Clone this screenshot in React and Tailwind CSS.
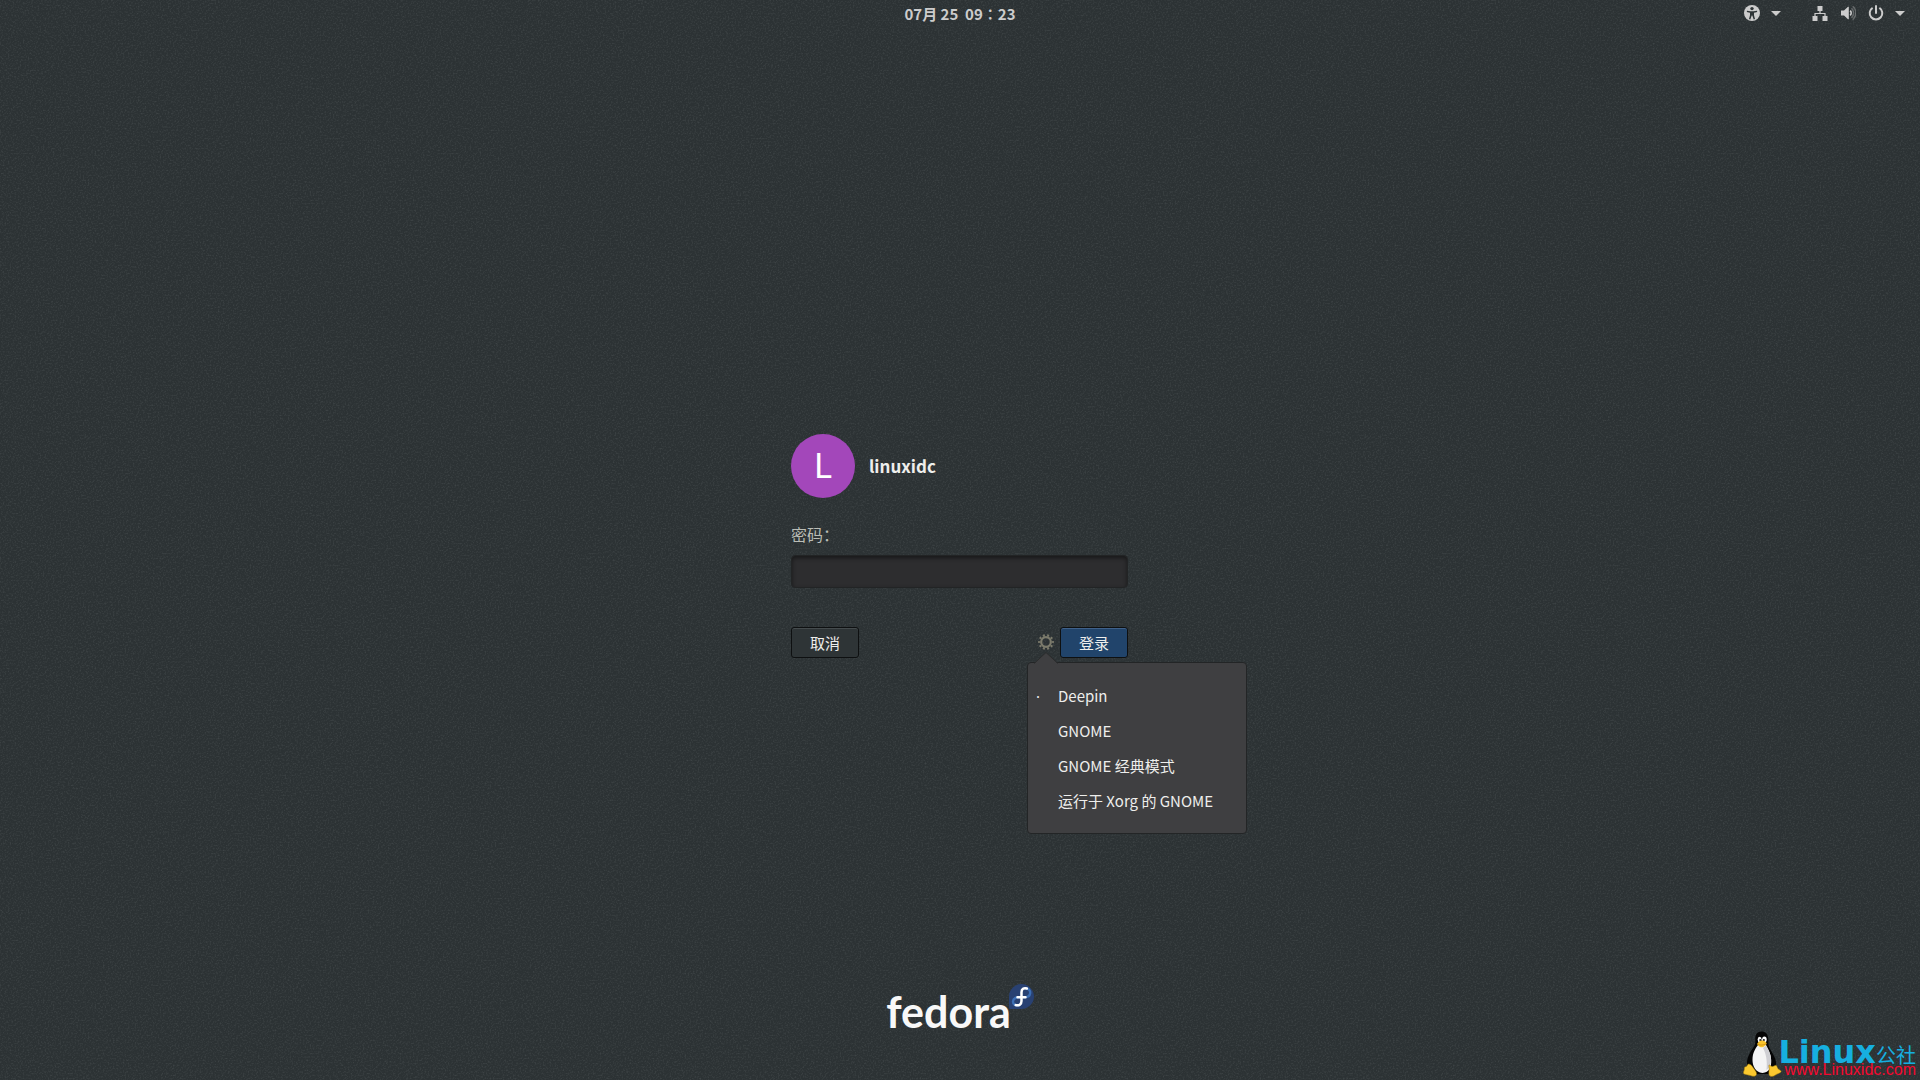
import React, { useState } from 'react';

const sessions = [
  { id: 'deepin', label: 'Deepin' },
  { id: 'gnome', label: 'GNOME' },
  { id: 'gnome-classic', label: 'GNOME 经典模式' },
  { id: 'gnome-xorg', label: '运行于 Xorg 的 GNOME' },
];

const NoiseBackground = () => (
  <svg className="absolute inset-0 -z-10 h-full w-full" aria-hidden="true">
    <filter id="noise" x="0" y="0" width="100%" height="100%">
      <feTurbulence type="fractalNoise" baseFrequency="0.6" numOctaves="2" stitchTiles="stitch" />
      <feColorMatrix type="matrix" values="0 0 0 0 0.6  0 0 0 0 0.65  0 0 0 0 0.65  0.26 0 0 0 -0.12" />
    </filter>
    <rect width="100%" height="100%" filter="url(#noise)" />
  </svg>
);

const CaretIcon = () => (
  <svg className="h-4 w-4" viewBox="0 0 16 16" fill="currentColor" aria-hidden="true">
    <path d="M3 6h10l-5 5z" />
  </svg>
);

const AccessibilityIcon = () => (
  <svg className="h-4 w-4" viewBox="0 0 16 16" aria-hidden="true">
    <circle cx="8" cy="8" r="8" fill="currentColor" />
    <circle cx="8" cy="3.6" r="1.7" fill="#2e3436" />
    <path d="M3 5.700l3.500.6h3l3.500-.6.2 1.300-3.200.8v2.400l1 3.800-1.300.5L8.300 10.500h-.6L6.300 14.500 5 14l1-3.800V7.800L2.800 7z" fill="#2e3436" />
  </svg>
);

const NetworkIcon = () => (
  <svg className="h-4 w-4" viewBox="0 0 16 16" fill="currentColor" aria-hidden="true">
    <path d="M5.500 1h5v5h-5zM.5 11h5v5h-5zM10.500 11h5v5h-5z" />
    <path d="M8 6v2.500M3 11V8.500h10V11" fill="none" stroke="currentColor" strokeWidth="1.200" />
  </svg>
);

const VolumeIcon = () => (
  <svg className="h-4 w-4" viewBox="0 0 16 16" aria-hidden="true">
    <path d="M1 5.500h3L8 1.800h.8v12.400H8L4 10.500H1z" fill="currentColor" />
    <path d="M10.200 5.600a3.400 3.400 0 0 1 0 4.800" fill="none" stroke="currentColor" strokeWidth="1.600" />
    <path d="M11.500 3.200a6.500 6.500 0 0 1 0 9.600M12.700 1.200a9 9 0 0 1 0 13.600" fill="none" stroke="currentColor" strokeWidth="1.500" opacity="0.35" />
  </svg>
);

const PowerIcon = () => (
  <svg className="h-4 w-4" viewBox="0 0 16 16" fill="none" stroke="currentColor" strokeWidth="2" aria-hidden="true">
    <path d="M4.600 2.800a6.300 6.300 0 1 0 6.800 0" />
    <path d="M8 1v7" strokeLinecap="round" />
  </svg>
);

const GearIcon = () => (
  <svg className="h-4 w-4" viewBox="0 0 16 16" fill="none" stroke="currentColor" aria-hidden="true">
    <circle cx="8" cy="8" r="4.800" strokeWidth="2.200" />
    {/* ten teeth */}
    <circle cx="8" cy="8" r="6.800" strokeWidth="2.200" pathLength="100" strokeDasharray="4.600 5.400" strokeDashoffset="2.300" />
  </svg>
);

const TopBar = () => (
  <header className="grid h-7 grid-cols-[1fr_auto_1fr] items-center px-3 text-[#cccccc]">
    <button type="button" className="col-start-2 text-[15px] leading-7 font-bold whitespace-pre">{'07月 25  09∶23'}</button>
    <div className="flex items-center justify-end gap-7 pb-[2px]">
      <button type="button" aria-label="辅助功能" className="flex items-center gap-2">
        <AccessibilityIcon />
        <CaretIcon />
      </button>
      <button type="button" aria-label="系统" className="flex items-center gap-3">
        <NetworkIcon />
        <VolumeIcon />
        <span className="flex items-center gap-2">
          <PowerIcon />
          <CaretIcon />
        </span>
      </button>
    </div>
  </header>
);

const SessionMenu = ({ selected, onSelect }) => (
  <div className="absolute top-7 -left-[11px] z-10 w-[220px] rounded border border-[#232526] bg-[#3f3f41] pt-4 pb-[14px]">
    <svg className="absolute -top-[11px] left-[6px] h-3 w-6" viewBox="0 0 24 12" aria-hidden="true">
      <path d="M0 12L12 0.500L24 12z" fill="#3f3f41" />
      <path d="M0 11.500L12 0.500L24 11.500" fill="none" stroke="#2b2c2d" />
    </svg>
    <ul>
      {sessions.map(({ id, label }) => (
        <li key={id}>
          <button
            type="button"
            className="flex h-[35px] w-full items-center text-left whitespace-nowrap text-[#eeeeec]"
            onClick={() => onSelect(id)}
          >
            <span className="w-[30px] pl-2 font-['Noto_Sans'] text-[15px]">{selected === id ? '·' : ''}</span>
            {label}
          </button>
        </li>
      ))}
    </ul>
  </div>
);

const LoginForm = () => {
  const [session, setSession] = useState('deepin');
  const [open, setOpen] = useState(true);

  return (
    <form className="w-[338px] pr-px text-[15px] leading-5" onSubmit={(e) => e.preventDefault()}>
      <div className="flex items-center gap-[14px]">
        <div className="flex h-16 w-16 items-center justify-center rounded-full bg-[#a347ba] font-['Noto_Sans'] text-[35px] leading-none text-white">
          <span className="pb-1">L</span>
        </div>
        <h1 className="text-[17px] leading-6 font-bold text-[#eeeeec]">linuxidc</h1>
      </div>
      <label htmlFor="password" className="mt-[26px] block text-base leading-5 text-[#babdb6]">密码：</label>
      <input
        id="password"
        type="password"
        className="mt-[11px] block h-[33px] w-full rounded border border-[#222425] bg-[#2d2d2f] px-2 text-[#eeeeec] shadow-[inset_0_2px_4px_rgba(0,0,0,0.5)] outline-none"
      />
      <div className="mt-[39px] flex items-center">
        <button type="button" className="h-[31px] w-[68px] rounded-[3px] border border-[#0e1011] bg-[#2e3436] text-[#eeeeec] shadow-[inset_0_1px_0_#454b4d]">
          取消
        </button>
        <div className="relative mr-[6px] mb-[2px] ml-auto">
          <button type="button" aria-label="选择会话" className="block text-[#7c7b6c]" onClick={() => setOpen(!open)}>
            <GearIcon />
          </button>
          {open && <SessionMenu selected={session} onSelect={setSession} />}
        </div>
        <button type="submit" className="h-[31px] w-[68px] rounded-[3px] border border-[#0e1011] bg-[#21446b] text-[#eeeeec] shadow-[inset_0_1px_0_#40618a]">
          登录
        </button>
      </div>
    </form>
  );
};

const FedoraMark = () => (
  <svg className="mt-1 -ml-[2px] h-[25px] w-[25px]" viewBox="0 0 25 25" fill="none" strokeLinecap="round" aria-hidden="true">
    <path d="M12.500 0A12.500 12.500 0 1 1 12.500 25H1.600A1.600 1.600 0 0 1 0 23.400V12.500A12.500 12.500 0 0 1 12.500 0z" fill="#294172" />
    <g stroke="#3c6eb4" strokeWidth="2.400">
      <path d="M16.500 4.300c3.200.2 5 2.400 4.700 4.800-.4 2.800-2.700 4.300-6.200 4.100" />
      <path d="M11 13.200c-3.800-.3-6.800 1.400-7 4.300-.1 2.500 2 4 4.800 4" />
    </g>
    <path d="M17.800 4.500c-3-1-5.300.7-5.300 3.700v8.800c0 3.400-2.500 5-5.800 4.100M8.500 13.200h8" stroke="#fff" strokeWidth="2.500" />
  </svg>
);

const FedoraLogo = () => (
  <div className="flex items-start">
    <span className="mt-2 font-['Lato'] text-[43px] leading-[48px] font-bold text-[#f8f8f8]">fedora</span>
    <FedoraMark />
  </div>
);

const Tux = () => (
  <svg className="h-[46px] w-[39px]" viewBox="0 0 39 46" aria-hidden="true">
    <path d="M18.500.5c-4 0-6.300 2.800-6.200 7.500.1 4 .2 5.500-2.300 9C7 21 4 27 4 32c0 4 3 9 6 11h17c4-2 6.500-7 6-12-.6-5-4-9.500-6.300-13.500C25 14.500 25.500 11 25.200 7.500 24.800 3 22.500.5 18.500.5z" fill="#050505" />
    <path d="M15 14c-3 4-5.500 8-5.500 15 0 6 3 12.500 10 13 7-.5 9-6 8.700-13-.2-6-2.700-10.500-5.200-15z" fill="#f4f4f4" />
    <path d="M20 17c3 6 4.500 12 3.500 22 3-2 4.500-5 4.500-10 0-6-2.500-10-5-14.500z" fill="#cfcfd3" />
    <ellipse cx="16.600" cy="8.500" rx="2" ry="2.700" fill="#fff" />
    <ellipse cx="21.400" cy="8.500" rx="2.300" ry="2.900" fill="#fff" />
    <circle cx="17.200" cy="9" r=".9" fill="#111" />
    <circle cx="20.900" cy="9" r="1" fill="#111" />
    <path d="M14.300 12.500c1.200-1.800 3-3 4.600-3 1.800 0 4.300 1.200 4.700 2.700.3 1.500-3.100 4.100-5 4.100-1.800 0-4.800-2-4.300-3.800z" fill="#f9c32c" />
    <path d="M14.500 12.800c2 1.600 5.500 1.800 9-.3" fill="none" stroke="#b87a08" strokeWidth=".6" />
    <path d="M5.500 33c2-.4 3.800 2.200 5.300 4.500 1.400 2.300 3.300 3.800 2.700 6-.7 2.300-3.500 2-5.600 1.200C5.500 43.800 1 43.700.4 42.200c-.4-1.300 1.200-2.700.9-4.600-.2-2 1-1.700 2-2.100 1-.5 1-2.300 2.200-2.500z" fill="#fbc92f" stroke="#8c6a08" strokeWidth=".5" />
    <path d="M26.500 34c1.200 1 2.600 1.900 4.300 1.100 1.500-.7 2.400-1.300 3.100.1.600 1.400.7 2.400 2.300 3.400 1.300.8 2.500 1.500 1.800 2.500-1.100 1.400-4 1.500-6.200 3.300-1.700 1.400-4.900 1.600-5.700-.5-.7-2.200.2-4.500.1-6.700-.1-1.200-.8-3.500.3-3.200z" fill="#fbc92f" stroke="#8c6a08" strokeWidth=".5" />
  </svg>
);

const Watermark = () => (
  <a href="#linuxidc" className="absolute right-1 bottom-0 flex items-end">
    <span className="-mr-1 mb-[3px] block"><Tux /></span>
    <span className="flex flex-col items-end pb-[2px]">
      <span className="flex h-[22px] items-baseline leading-6 text-[#16afe0]">
        <span className="font-['DejaVu_Sans'] text-[32px] font-bold">Linux</span>
        <span className="text-[20px]">公社</span>
      </span>
      <span className="font-['Liberation_Sans'] text-base leading-4 text-[#f5082f]">www.Linuxidc.com</span>
    </span>
  </a>
);

export default function App() {
  return (
    <div className="relative isolate flex min-h-screen flex-col overflow-hidden bg-[#2c3234] font-['Noto_Sans_CJK_SC',sans-serif]">
      <NoiseBackground />
      <TopBar />
      <main className="flex flex-1 flex-col items-center justify-center pt-[84px]">
        <LoginForm />
      </main>
      <footer className="flex justify-center pb-11">
        <FedoraLogo />
      </footer>
      <Watermark />
    </div>
  );
}
